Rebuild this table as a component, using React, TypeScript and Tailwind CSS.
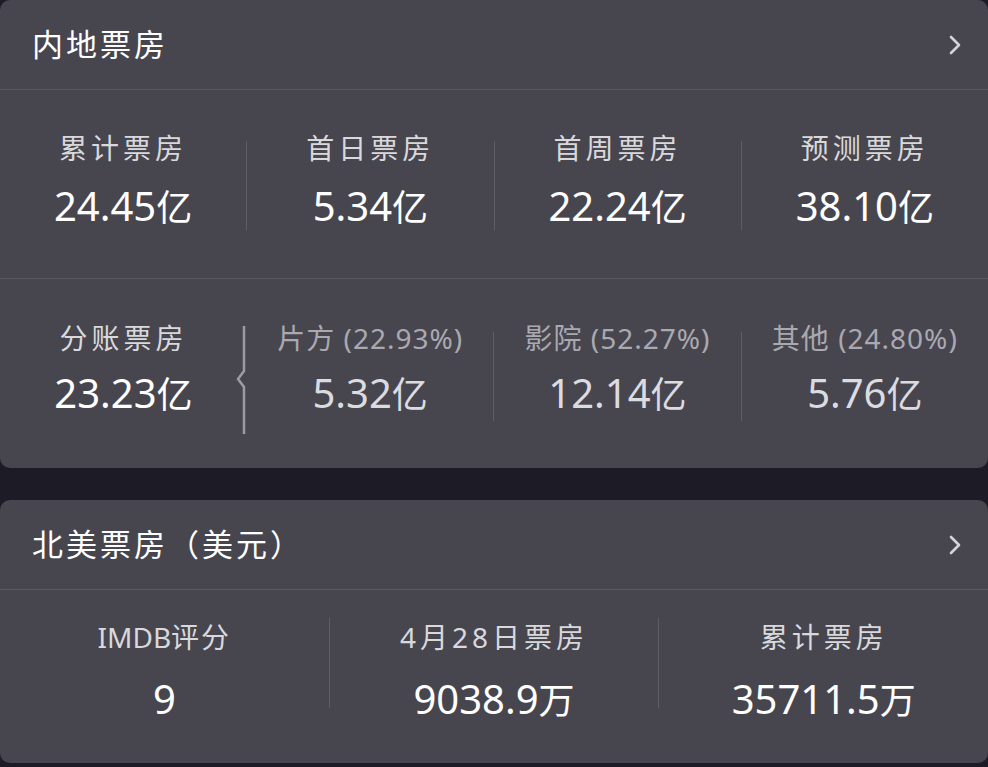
import React from "react";

const FONT = { fontFamily: '"Noto Sans", "Noto Sans CJK SC", sans-serif' };

const Chevron = () => (
  <svg width="14" height="22" viewBox="0 0 14 22" fill="none">
    <path d="M3 3 L11 11 L3 19" stroke="#d4d4d8" strokeWidth="2.6" strokeLinecap="round" strokeLinejoin="round" />
  </svg>
);

const Brace = () => (
  <svg width="14" height="108" viewBox="0 0 14 108" fill="none">
    <path d="M9 0 L9 45 L3 53 L9 61 L9 108" stroke="#9c9ba2" strokeWidth="2.5" strokeLinejoin="miter" />
  </svg>
);

const Header = ({ title }: { title: string }) => (
  <div className="flex items-center justify-between h-[90px] pl-[32px] pr-[26px] border-b border-[#5b5a63]">
    <span className="text-[31px] text-white tracking-[3px]">{title}</span>
    <Chevron />
  </div>
);

const Divider = ({ h }: { h: string }) => <div className={`w-px bg-[#5e5d66] ${h}`} />;

type Stat = { label: string; value: string; unit: string };

const StatCell = ({ s, muted = false, gap = "mt-[8px]" }: { s: Stat; muted?: boolean; gap?: string }) => (
  <div className="flex-1 flex flex-col items-center">
    <div
      className={`h-[40px] leading-[40px] whitespace-nowrap ${
        muted ? "text-[28px] text-[#aaa9b0] tracking-[1px]" : "text-[28px] text-[#d9d9dc] tracking-[4px]"
      }`}
    >
      {s.label}
    </div>
    <div className={`h-[54px] leading-[54px] ${gap} text-[40px] ${muted ? "text-[#dcdce0]" : "text-white"}`}>
      {s.value}
      <span className="text-[36px]">{s.unit}</span>
    </div>
  </div>
);

export default function App() {
  const top: Stat[] = [
    { label: "累计票房", value: "24.45", unit: "亿" },
    { label: "首日票房", value: "5.34", unit: "亿" },
    { label: "首周票房", value: "22.24", unit: "亿" },
    { label: "预测票房", value: "38.10", unit: "亿" },
  ];
  const split: Stat[] = [
    { label: "片方 (22.93%)", value: "5.32", unit: "亿" },
    { label: "影院 (52.27%)", value: "12.14", unit: "亿" },
    { label: "其他 (24.80%)", value: "5.76", unit: "亿" },
  ];
  const na: Stat[] = [
    { label: "IMDB评分", value: "9", unit: "" },
    { label: "4月28日票房", value: "9038.9", unit: "万" },
    { label: "累计票房", value: "35711.5", unit: "万" },
  ];

  return (
    <div className="w-[988px] h-[767px] bg-[#1d1b25] overflow-hidden" style={FONT}>
      {/* 内地票房 */}
      <div className="bg-[#47464f] rounded-[10px] h-[468px]">
        <Header title="内地票房" />
        <div className="flex pt-[38px] h-[189px] border-b border-[#5b5a63]">
          {top.map((s, i) => (
            <React.Fragment key={s.label}>
              {i > 0 && (
                <div className="pt-[13px]">
                  <Divider h="h-[89px]" />
                </div>
              )}
              <StatCell s={s} gap="mt-[11px]" />
            </React.Fragment>
          ))}
        </div>
        <div className="flex pt-[39px]">
          <div className="w-[247px] flex">
            <StatCell s={{ label: "分账票房", value: "23.23", unit: "亿" }} />
          </div>
          <div className="pt-[8px] w-[14px] -ml-[12px] -mr-[2px]">
            <Brace />
          </div>
          {split.map((s, i) => (
            <React.Fragment key={s.label}>
              {i > 0 && (
                <div className="pt-[14px]">
                  <Divider h="h-[89px]" />
                </div>
              )}
              <StatCell s={s} muted />
            </React.Fragment>
          ))}
        </div>
      </div>

      {/* 北美票房 */}
      <div className="bg-[#47464f] rounded-[10px] h-[263px] mt-[32px]">
        <Header title="北美票房（美元）" />
        <div className="flex pt-[27px]">
          {na.map((s, i) => (
            <React.Fragment key={s.label}>
              {i > 0 && (
                <div className="pt-[1px]">
                  <Divider h="h-[90px]" />
                </div>
              )}
              <div className="flex-1 flex flex-col items-center">
                <div className="h-[40px] leading-[40px] whitespace-nowrap text-[28px] text-[#d9d9dc]">
                  {s.label.startsWith("IMDB") ? (
                    <>
                      IMDB<span className="tracking-[2px]">评分</span>
                    </>
                  ) : (
                    <span className="tracking-[4px]">{s.label}</span>
                  )}
                </div>
                <div className="h-[54px] leading-[54px] mt-[15px] text-[40px] text-white">
                  {s.value}
                  <span className="text-[36px]">{s.unit}</span>
                </div>
              </div>
            </React.Fragment>
          ))}
        </div>
      </div>
    </div>
  );
}
